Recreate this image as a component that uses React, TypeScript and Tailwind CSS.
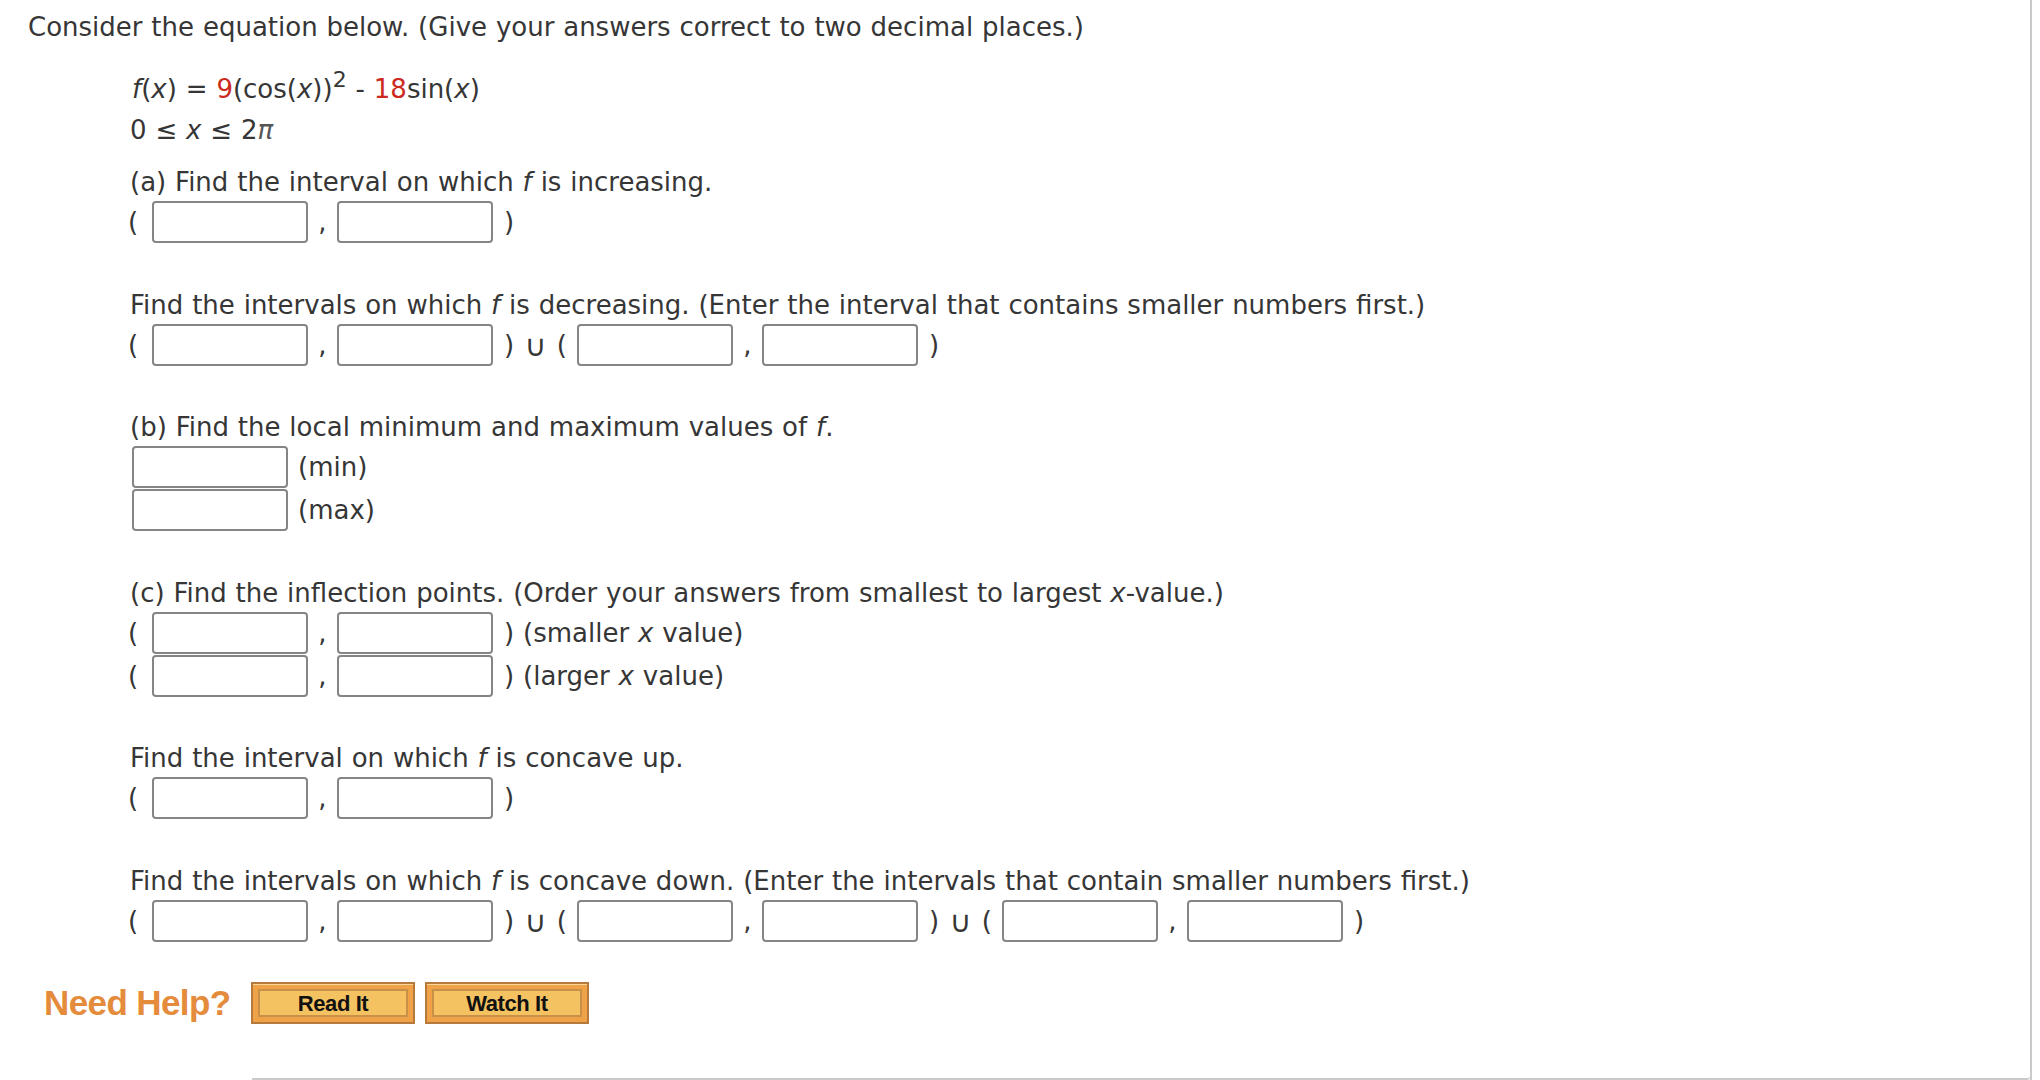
import React from 'react';

const font = { fontFamily: '"DejaVu Sans", Verdana, sans-serif', wordSpacing: '0.6px' };

function Box() {
  return (
    <input
      type="text"
      className="w-[156px] h-[42px] border-2 border-[#858585] rounded-[4px] bg-white outline-none"
    />
  );
}

// ( [ ] , [ ] )
function Pair() {
  return (
    <>
      <span className="w-[24px]">(</span>
      <Box />
      <span className="w-[29px] text-center">,</span>
      <Box />
    </>
  );
}

function Union() {
  return (
    <span className="w-[84px] flex items-center justify-between pl-[11px] pr-[10px]">
      <span>)</span>
      <span className="text-[30px]">∪</span>
      <span>(</span>
    </span>
  );
}

function Row({ children }: { children: React.ReactNode }) {
  return <div className="flex items-center h-[42px]">{children}</div>;
}

function Line({ children, className = '' }: { children: React.ReactNode; className?: string }) {
  return <div className={`h-[42px] leading-[42px] pt-[2px] pl-[2px] ${className}`}>{children}</div>;
}

function HelpButton({ label }: { label: string }) {
  return (
    <div className="w-[164px] h-[42px] border-2 border-[#b67a3c] bg-[#f0a248] p-[5px] shadow-[inset_0_1px_0_#fbd79a]">
      <div
        className="h-full border-2 border-[#c99047] bg-[#f4c260] flex items-center justify-center text-[22px] font-bold text-[#111] tracking-[-0.4px]"
        style={{ fontFamily: '"Liberation Sans", Arial, sans-serif', wordSpacing: '0px' }}
      >
        {label}
      </div>
    </div>
  );
}

export default function App() {
  return (
    <div className="w-[2032px] h-[1080px] bg-white border-r-2 border-[#cacaca] flex flex-col text-[26px] text-[#363636]" style={font}>
      {/* Title */}
      <div className="h-[54px] leading-[54px] pl-[28px]">
        Consider the equation below. (Give your answers correct to two decimal places.)
      </div>

      <div className="pl-[128px] flex flex-col">
        {/* Equation */}
        <Line className="mt-[12px] pl-[4px]">
          <i>f</i>(<i>x</i>) = <span className="text-[#cc2a1f]">9</span>(cos(<i>x</i>))
          <span className="text-[22px] relative top-[-11px]">2</span> - <span className="text-[#cc2a1f]">18</span>sin(<i>x</i>)
        </Line>
        <div className="h-[41px] leading-[41px] pt-[2px] pl-[2px]">
          0 ≤ <i>x</i> ≤ 2<i className="text-[#555]">π</i>
        </div>

        {/* (a) */}
        <Line className="mt-[10px]">
          (a) Find the interval on which <i>f</i> is increasing.
        </Line>
        <Row>
          <Pair />
          <span className="pl-[11px]">)</span>
        </Row>

        <Line className="mt-[39px]">
          Find the intervals on which <i>f</i> is decreasing. (Enter the interval that contains smaller numbers first.)
        </Line>
        <Row>
          <Pair />
          <Union />
          <Box />
          <span className="w-[29px] text-center">,</span>
          <Box />
          <span className="pl-[11px]">)</span>
        </Row>

        {/* (b) */}
        <Line className="mt-[38px]">
          (b) Find the local minimum and maximum values of <i>f</i>.
        </Line>
        <div className="flex flex-col gap-[1px] pl-[4px]">
          <Row>
            <Box />
            <span className="pl-[10px]">(min)</span>
          </Row>
          <Row>
            <Box />
            <span className="pl-[10px]">(max)</span>
          </Row>
        </div>

        {/* (c) */}
        <Line className="mt-[39px]">
          (c) Find the inflection points. (Order your answers from smallest to largest <i>x</i>-value.)
        </Line>
        <div className="flex flex-col gap-[1px]">
          <Row>
            <Pair />
            <span className="pl-[11px]">
              ) (smaller <i>x</i> value)
            </span>
          </Row>
          <Row>
            <Pair />
            <span className="pl-[11px]">
              ) (larger <i>x</i> value)
            </span>
          </Row>
        </div>

        <Line className="mt-[38px]">
          Find the interval on which <i>f</i> is concave up.
        </Line>
        <Row>
          <Pair />
          <span className="pl-[11px]">)</span>
        </Row>

        <Line className="mt-[39px]">
          Find the intervals on which <i>f</i> is concave down. (Enter the intervals that contain smaller numbers first.)
        </Line>
        <Row>
          <Pair />
          <Union />
          <Box />
          <span className="w-[29px] text-center">,</span>
          <Box />
          <Union />
          <Box />
          <span className="w-[29px] text-center">,</span>
          <Box />
          <span className="pl-[11px]">)</span>
        </Row>
      </div>

      {/* Need Help */}
      <div className="flex items-center mt-[35px] pl-[44px]">
        <span
          className="w-[207px] text-[35px] font-bold text-[#e48b3c] tracking-[-0.6px]"
          style={{ fontFamily: '"Liberation Sans", Arial, sans-serif', wordSpacing: '0px' }}
        >
          Need Help?
        </span>
        <HelpButton label="Read It" />
        <div className="w-[10px]" />
        <HelpButton label="Watch It" />
      </div>

      <div className="flex-1" />
      <div className="ml-[252px] h-[3px] border-b-2 border-[#cacaca] rounded-br-[4px]" />
    </div>
  );
}
